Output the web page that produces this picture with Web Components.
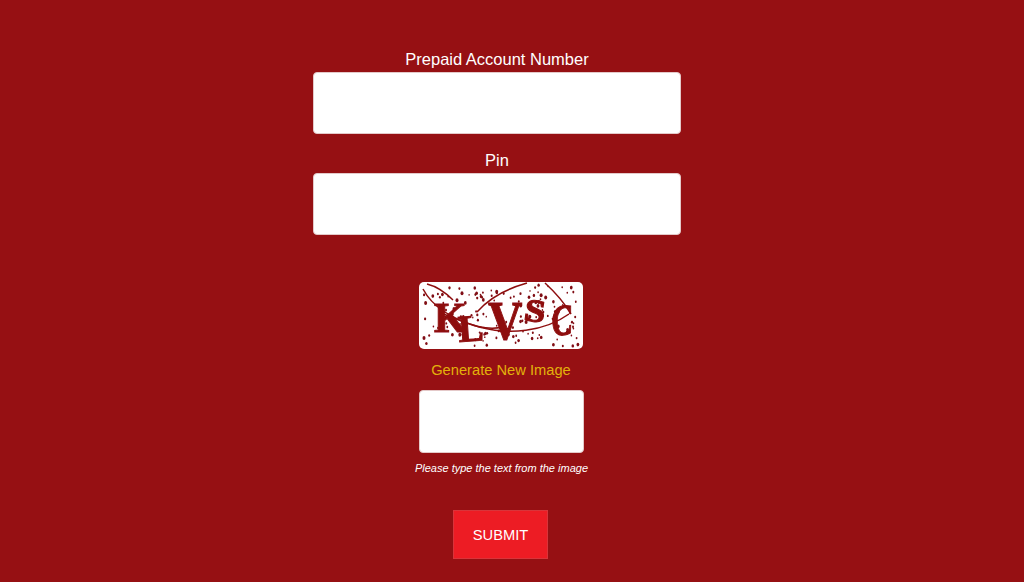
<!DOCTYPE html>
<html lang="en">
<head>
<meta charset="utf-8">
<title>Prepaid Account</title>
<style>
  html, body { margin: 0; height: 100%; background: #961013; overflow: hidden; }
</style>
</head>
<body>
<prepaid-form></prepaid-form>

<script>
// text field with a label over it
class FormField extends HTMLElement {
  connectedCallback() {
    this.attachShadow({ mode: 'open' });
    this.shadowRoot.innerHTML = `
      <style>
        :host { display: block; }
        label {
          display: block;
          text-align: center;
          color: #fff;
          font-size: 16.5px;
          line-height: 20px;
          margin-bottom: 3px;
        }
        input {
          display: block;
          box-sizing: border-box;
          width: 100%;
          height: 62px;
          background: #fff;
          border: 1px solid #e4c9c9;
          border-radius: 4px;
          outline: none;
        }
      </style>
      <label><slot></slot></label>
      <input type="text">
    `;
  }
}

// noisy captcha picture
class CaptchaImage extends HTMLElement {
  connectedCallback() {
    this.attachShadow({ mode: 'open' });
    let seed = 37;
    const rnd = () => (seed = (seed * 16807) % 2147483647) / 2147483647;
    let dots = '';
    for (let i = 0; i < 150; i++) {
      const x = (5 + rnd() * 154).toFixed(1);
      const y = (3 + rnd() * 61).toFixed(1);
      const r = (0.7 + rnd() * 0.8).toFixed(1);
      dots += `<ellipse cx="${x}" cy="${y}" rx="${r}" ry="${(r * 1.3).toFixed(1)}"/>`;
    }
    this.shadowRoot.innerHTML = `
      <style>
        :host { display: block; width: 164px; height: 67px; }
        svg { display: block; overflow: visible; }
        text {
          font-family: "Liberation Serif", serif;
          font-weight: 700;
          fill: #8e0d10;
          stroke: #8e0d10;
          stroke-width: 1;
        }
      </style>
      <svg width="164" height="67" viewBox="0 0 164 67">
        <defs><filter id="soft"><feGaussianBlur stdDeviation="0.45"/></filter></defs>
        <rect width="164" height="67" rx="5" fill="#fff"/>
        <g filter="url(#soft)">
          <g fill="#801014">${dots}</g>
          <g fill="none" stroke="#8e0d10" stroke-width="1.5">
            <path d="M4 7C14 26 36 38 60 45C90 53 125 50 150 32"/>
            <path d="M24 32C42 38 62 50 84 45"/>
            <path d="M58 30C72 14 90 6 108 1"/>
            <path d="M126 1C138 12 146 22 152 32"/>
            <path d="M8 2C16 4 26 10 34 18"/>
          </g>
          <text font-size="42" transform="translate(15 50)">K</text>
          <text font-size="38" transform="translate(40 60) rotate(-4)">L</text>
          <text font-size="56" transform="translate(69 57) scale(.85 1)">V</text>
          <text font-size="32" transform="translate(104 38) rotate(8) scale(1.2 1)">S</text>
          <text font-size="44" font-style="italic" transform="translate(134 54) rotate(-6) scale(.7 1)">C</text>
        </g>
      </svg>
    `;
  }
}

class PrepaidForm extends HTMLElement {
  connectedCallback() {
    this.attachShadow({ mode: 'open' });
    this.shadowRoot.innerHTML = `
      <style>
        :host {
          display: block;
          width: 368px;
          margin-left: 313px;
          padding-top: 49px;
          font-family: "Liberation Sans", Arial, sans-serif;
        }
        .fields { display: flex; flex-direction: column; gap: 16px; }
        .captcha {
          display: flex;
          flex-direction: column;
          align-items: center;
          margin-top: 47px;
          padding-left: 8px;
        }
        a {
          color: #e3b00b;
          font-size: 14.7px;
          line-height: 18px;
          margin-top: 12px;
          text-decoration: none;
        }
        input {
          display: block;
          box-sizing: border-box;
          width: 165px;
          height: 63px;
          margin-top: 11px;
          margin-left: 1px;
          background: #fff;
          border: 1px solid #e4c9c9;
          border-radius: 4px;
          outline: none;
        }
        .hint {
          color: #fff;
          font-size: 11px;
          font-style: italic;
          line-height: 14px;
          margin-top: 8px;
          margin-left: 1px;
        }
        button {
          width: 95px;
          height: 49px;
          margin-top: 35px;
          margin-right: 1px;
          background: #ed1c24;
          border: 1px solid #d9343a;
          color: #fff;
          font: 14.7px "Liberation Sans", Arial, sans-serif;
          padding: 0;
        }
      </style>
      <div class="fields">
        <form-field>Prepaid Account Number</form-field>
        <form-field>Pin</form-field>
      </div>
      <div class="captcha">
        <captcha-image></captcha-image>
        <a href="#">Generate New Image</a>
        <input type="text">
        <div class="hint">Please type the text from the image</div>
        <button type="button">SUBMIT</button>
      </div>
    `;
  }
}

customElements.define('form-field', FormField);
customElements.define('captcha-image', CaptchaImage);
customElements.define('prepaid-form', PrepaidForm);
</script>
</body>
</html>
